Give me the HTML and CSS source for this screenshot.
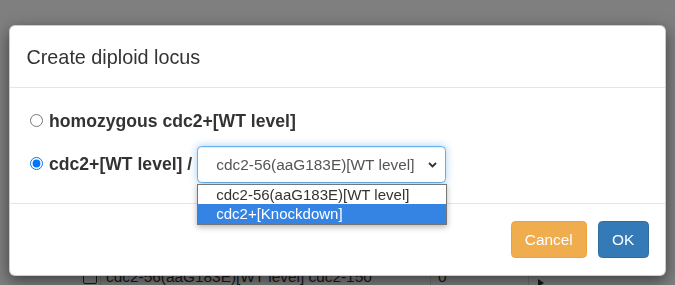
FILE: index.html
```html
<!DOCTYPE html>
<html lang="en">
<head>
    <meta charset="UTF-8">
    <meta name="viewport" content="width=device-width, initial-scale=1.0">
    <title>Create diploid locus</title>
    <link rel="stylesheet" href="styles.css">
</head>
<body>
    <main class="page">
        <table class="loci">
            <tr>
                <td class="pick"><span class="box"></span></td>
                <td class="name">cdc2-56(aaG183E)[WT level] cdc2-150</td>
                <td class="count">0</td>
                <td class="more">
                    <svg width="8" height="10" viewBox="0 0 8 10"><path d="M1 1 L7 5 L1 9 Z" fill="#333"/></svg>
                </td>
            </tr>
        </table>
    </main>

    <div class="backdrop"></div>

    <div class="modal">
        <div class="modal-header">
            <h4 class="modal-title">Create diploid locus</h4>
        </div>
        <div class="modal-body">
            <label class="choice first">
                <input type="radio" name="diploid" value="homozygous">
                <span>homozygous cdc2+[WT level]</span>
            </label>
            <div class="choice second">
                <label class="choice-label">
                    <input type="radio" name="diploid" value="other" checked>
                    <span>cdc2+[WT level] /</span>
                </label>
                <div class="select-wrap">
                    <select class="allele-select">
                        <option>cdc2-56(aaG183E)[WT level]</option>
                        <option>cdc2+[Knockdown]</option>
                    </select>
                    <svg class="chevron" width="9" height="6" viewBox="0 0 9 6"><path d="M1 1 L4.5 4.5 L8 1" fill="none" stroke="#333" stroke-width="1.8"/></svg>
                    <ul class="options">
                        <li>cdc2-56(aaG183E)[WT level]</li>
                        <li class="active">cdc2+[Knockdown]</li>
                    </ul>
                </div>
            </div>
        </div>
        <div class="modal-footer">
            <button class="btn btn-warning">Cancel</button>
            <button class="btn btn-primary">OK</button>
        </div>
    </div>
</body>
</html>
```

FILE: styles.css
```css
* {
    box-sizing: border-box;
}
body {
    margin: 0;
    font-family: "Liberation Sans", Arial, sans-serif;
    font-size: 15.4px;
    color: #333;
    background-color: #fff;
}
.page {
    padding: 261px 0 0 78px;
}
.loci {
    border-collapse: collapse;
}
.loci td {
    padding: 5px;
    line-height: 22px;
    border-left: 1px solid #ddd;
    vertical-align: top;
}
.loci td.pick {
    border-left: none;
    width: 22px;
    padding: 9px 3px 0 5px;
}
.box {
    display: block;
    width: 14px;
    height: 14px;
    border: 1px solid #333;
    border-radius: 2px;
}
.loci td.name {
    width: 330px;
}
.loci td.count {
    width: 98px;
    padding-left: 7px;
}
.loci td.more {
    width: 60px;
    padding: 11px 8px 0;
}
.backdrop {
    position: fixed;
    top: 0;
    left: 0;
    right: 0;
    bottom: 0;
    background-color: rgba(0, 0, 0, 0.5);
}
.modal {
    position: fixed;
    top: 25px;
    left: 9px;
    width: 657px;
    background-color: #fff;
    border: 1px solid rgba(0, 0, 0, 0.2);
    border-radius: 6px;
    box-shadow: 0 5px 15px rgba(0, 0, 0, 0.5);
}
.modal-header {
    padding: 16.5px;
    border-bottom: 1px solid #e5e5e5;
}
.modal-title {
    margin: 0;
    font-size: 19.8px;
    font-weight: normal;
    line-height: 1.42857;
}
.modal-body {
    display: flex;
    flex-direction: column;
    padding: 16.5px;
}
.choice {
    display: flex;
    align-items: center;
    font-size: 17.6px;
    font-weight: bold;
    line-height: 25px;
}
.choice.first {
    margin-top: 4.6px;
}
.choice.second {
    margin-top: 11.6px;
    margin-bottom: 4px;
}
.choice-label {
    display: flex;
    align-items: center;
}
.choice input[type="radio"] {
    width: 13px;
    height: 13px;
    margin: 0 6px 3px 3.5px;
}
.choice.second input[type="radio"] {
    margin-bottom: 2px;
}
.select-wrap {
    position: relative;
    margin-left: 5px;
    width: 249px;
    height: 37px;
}
.allele-select {
    appearance: none;
    -webkit-appearance: none;
    width: 100%;
    height: 100%;
    padding: 0 0 0 18px;
    font-family: "Liberation Sans", Arial, sans-serif;
    font-size: 15.4px;
    color: #555;
    background-color: #fff;
    border: 1px solid #66afe9;
    border-radius: 4.4px;
    outline: none;
    box-shadow: inset 0 1px 1px rgba(0, 0, 0, 0.075), 0 0 8px rgba(102, 175, 233, 0.6);
}
.chevron {
    position: absolute;
    right: 9px;
    top: 16px;
}
.options {
    position: absolute;
    top: 38px;
    left: 0;
    width: 250px;
    margin: 0;
    padding: 0;
    list-style: none;
    background-color: #fff;
    border: 1px solid #767676;
    box-shadow: 0 2px 6px rgba(0, 0, 0, 0.3);
    font-size: 15px;
    font-weight: normal;
}
.options li {
    height: 19.5px;
    line-height: 19.5px;
    padding-left: 18px;
    color: #333;
}
.options li.active {
    background-color: #3584e4;
    color: #fff;
}
.modal-footer {
    display: flex;
    justify-content: flex-end;
    gap: 11px;
    padding: 16.5px;
    border-top: 1px solid #e5e5e5;
}
.btn {
    padding: 6.6px 13.2px;
    font-family: "Liberation Sans", Arial, sans-serif;
    font-size: 15.4px;
    line-height: 22px;
    color: #fff;
    border: 1px solid transparent;
    border-radius: 4.4px;
    cursor: pointer;
}
.btn-warning {
    background-color: #f0ad4e;
    border-color: #eea236;
}
.btn-primary {
    background-color: #337ab7;
    border-color: #2e6da4;
}
```
